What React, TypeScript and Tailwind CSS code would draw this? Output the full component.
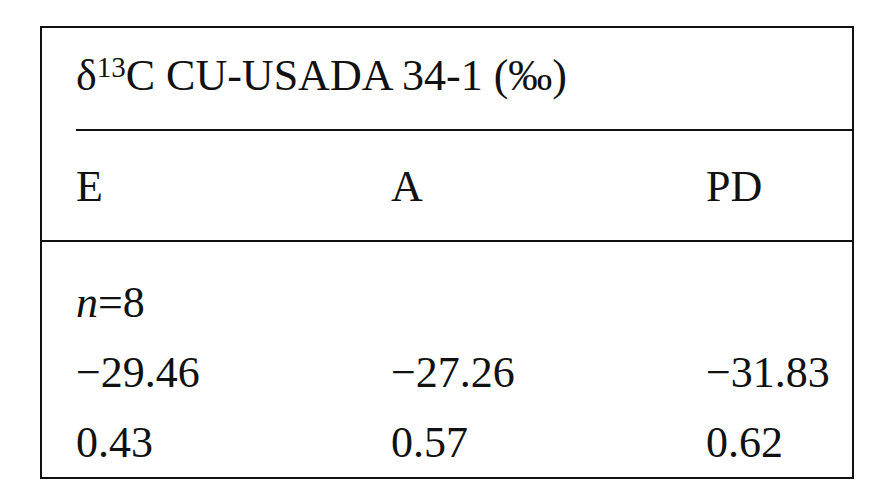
import React from "react";

const f = "font-['Liberation_Serif',serif]";

export default function App() {
  return (
    <div className="w-[886px] h-[494px] bg-white pt-[26px] pl-[40px]">
      <div className="w-[814px] h-[453px] border-2 border-[#111] text-[#111] text-[44px] leading-[50px] flex flex-col">
        <div className="ml-[34px] pt-[20px] pb-[28px] border-b-2 border-[#111]">
          <span className={f}>δ</span>
          <span className={`${f} relative top-[-13px] text-[29px] leading-none`}>13</span>
          <span className={f}>C CU-USADA 34-1 (‰)</span>
        </div>
        <div className="pl-[34px] pt-[31px] pb-[28px] border-b-2 border-[#111] grid grid-cols-[315px_315px_1fr]">
          <div className={f}>E</div>
          <div className={f}>A</div>
          <div className={f}>PD</div>
        </div>
        <div className="pl-[34px] pt-[33px] flex flex-col gap-[20px]">
          <div>
            <i className={f}>n</i>
            <span className={f}>=8</span>
          </div>
          <div className="grid grid-cols-[315px_315px_1fr]">
            <div className={f}>−29.46</div>
            <div className={f}>−27.26</div>
            <div className={f}>−31.83</div>
          </div>
          <div className="grid grid-cols-[315px_315px_1fr]">
            <div className={f}>0.43</div>
            <div className={f}>0.57</div>
            <div className={f}>0.62</div>
          </div>
        </div>
      </div>
    </div>
  );
}
